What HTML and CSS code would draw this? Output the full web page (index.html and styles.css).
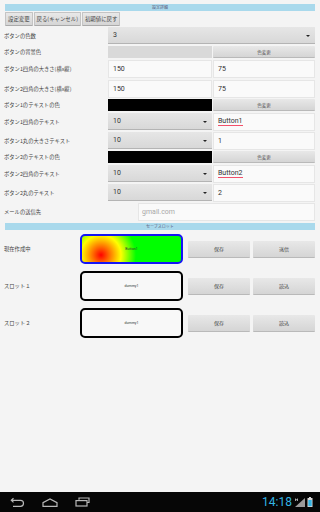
FILE: index.html
```html
<!DOCTYPE html>
<html lang="ja">
<head>
<meta charset="utf-8">
<link rel="stylesheet" href="styles.css">
</head>
<body>
<div class="screen">
  <div class="content">
    <div class="bar">設定詳細</div>
    <div class="toolbar">
      <div class="btn tb">設定変更</div>
      <div class="btn tb">戻る(キャンセル)</div>
      <div class="btn tb">初期値に戻す</div>
    </div>

    <div class="row h19">
      <div class="label">ボタンの色数</div>
      <div class="spinner wide"><span>3</span><i class="tri"></i></div>
    </div>
    <div class="row h14">
      <div class="label">ボタンの背景色</div>
      <div class="cell swatch grey"></div>
      <div class="cell2 btn small">色変更</div>
    </div>
    <div class="row h20">
      <div class="label">ボタン1四角の大きさ(横x縦)</div>
      <div class="cell edit">150</div>
      <div class="cell2 edit">75</div>
    </div>
    <div class="row h19">
      <div class="label">ボタン2四角の大きさ(横x縦)</div>
      <div class="cell edit">150</div>
      <div class="cell2 edit">75</div>
    </div>
    <div class="row h14">
      <div class="label">ボタン1のテキストの色</div>
      <div class="cell swatch black"></div>
      <div class="cell2 btn small">色変更</div>
    </div>
    <div class="row h19">
      <div class="label">ボタン1四角のテキスト</div>
      <div class="cell spinner"><span>10</span><i class="tri"></i></div>
      <div class="cell2 edit"><span class="spell">Button1</span></div>
    </div>
    <div class="row h19">
      <div class="label">ボタン1丸の大きさテキスト</div>
      <div class="cell spinner"><span>10</span><i class="tri"></i></div>
      <div class="cell2 edit">1</div>
    </div>
    <div class="row h14">
      <div class="label">ボタン2のテキストの色</div>
      <div class="cell swatch black"></div>
      <div class="cell2 btn small">色変更</div>
    </div>
    <div class="row h19">
      <div class="label">ボタン2四角のテキスト</div>
      <div class="cell spinner"><span>10</span><i class="tri"></i></div>
      <div class="cell2 edit"><span class="spell">Button2</span></div>
    </div>
    <div class="row h19">
      <div class="label">ボタン2丸のテキスト</div>
      <div class="cell spinner"><span>10</span><i class="tri"></i></div>
      <div class="cell2 edit">2</div>
    </div>
    <div class="row h20">
      <div class="label mail">メールの送信先</div>
      <div class="cell2 edit hint">gmail.com</div>
    </div>

    <div class="bar bar2">セーブスロット</div>

    <div class="slots">
      <div class="slot">
        <div class="slabel">現在作成中</div>
        <div class="preview current"><span>Button1</span></div>
        <div class="btn sbtn">保存</div>
        <div class="btn sbtn">送信</div>
      </div>
      <div class="slot">
        <div class="slabel">スロット１</div>
        <div class="preview"><span>dummy1</span></div>
        <div class="btn sbtn">保存</div>
        <div class="btn sbtn">読込</div>
      </div>
      <div class="slot">
        <div class="slabel">スロット２</div>
        <div class="preview"><span>dummy1</span></div>
        <div class="btn sbtn">保存</div>
        <div class="btn sbtn">読込</div>
      </div>
    </div>
  </div>

  <div class="navbar">
    <div class="navkeys">
      <svg class="key back" width="15" height="10" viewBox="0 0 15 10"><path d="M3.5 1.2 L1.3 3.3 L3.5 5.4 M1.5 3.3 H10.5 A3 3 0 0 1 10.5 9.3 H3" fill="none" stroke="#b8b8b8" stroke-width="1.2"/></svg>
      <svg class="key home" width="16" height="9" viewBox="0 0 16 9"><path d="M1 8.3 V4.6 L8 0.9 L15 4.6 V8.3 Z" fill="none" stroke="#b8b8b8" stroke-width="1.2"/></svg>
      <svg class="key recent" width="15" height="10" viewBox="0 0 15 10"><path d="M4 2.8 V1 H14 V5.5 H12" fill="none" stroke="#b8b8b8" stroke-width="1.2"/><rect x="1" y="3.6" width="11" height="5.4" fill="none" stroke="#b8b8b8" stroke-width="1.2"/></svg>
    </div>
    <div class="status">
      <span class="clock">14:18</span>
      <svg width="10" height="9" viewBox="0 0 10 9"><path d="M10 0 V9 H0 Z" fill="#9a9a9a"/><path d="M0.5 0.5 V3 M2.5 0.5 V3 M0.5 1.7 H2.5" stroke="#ddd" stroke-width="0.7"/></svg>
      <svg width="6" height="10" viewBox="0 0 6 10"><rect x="2" y="0" width="2" height="1" fill="#d8d8d8"/><rect x="0.5" y="1" width="5" height="9" fill="#d8d8d8"/><rect x="1.3" y="3" width="3.4" height="6.2" fill="#33b5e5"/></svg>
    </div>
  </div>
</div>
</body>
</html>
```

FILE: styles.css
```css
* { box-sizing: border-box; }
html, body { margin: 0; padding: 0; }
body {
  width: 320px;
  height: 512px;
  overflow: hidden;
  background: #f4f4f4;
  font-family: "Noto Sans CJK JP", "Noto Sans", sans-serif;
  color: #444;
}
.screen {
  display: flex;
  flex-direction: column;
  height: 512px;
}
.content {
  flex: 1;
  padding: 4px 5px 0 4px;
}
.bar {
  margin-left: 1px;
  height: 7px;
  background: #a9d9ec;
  font-size: 4px;
  line-height: 7px;
  text-align: center;
  color: #557;
}
.toolbar {
  display: flex;
  gap: 1px;
  margin: 1px 0 0 1px;
  height: 14px;
}
.btn {
  background: linear-gradient(#e8e8e8, #d5d5d5);
  border-bottom: 1px solid #b9b9b9;
  border-radius: 1px;
  display: flex;
  align-items: center;
  justify-content: center;
  color: #444;
}
.tb {
  padding: 0 2px;
  font-size: 5.4px;
  border: 1px solid #c4c4c4;
  border-bottom-color: #aaa;
}
.row {
  display: flex;
  align-items: center;
}
.h14 { height: 14px; }
.h19 { height: 19px; }
.h20 { height: 20px; }
.label {
  width: 104px;
  flex: none;
  font-size: 5.3px;
  color: #444;
  white-space: nowrap;
}
.label.mail { width: 134px; }
.cell {
  width: 104px;
  flex: none;
  margin-right: 1px;
}
.cell2 { flex: 1; }
.spinner {
  height: 17px;
  background: linear-gradient(#e6e6e6, #d8d8d8);
  border-bottom: 1px solid #b4b4b4;
  display: flex;
  align-items: center;
  justify-content: space-between;
  padding: 0 5px;
  font-family: Roboto, "Noto Sans", sans-serif;
  font-size: 7px;
  color: #333;
}
.spinner.wide { flex: 1; }
.tri {
  width: 0;
  height: 0;
  border-left: 2px solid transparent;
  border-right: 2px solid transparent;
  border-top: 2.5px solid #222;
  margin-top: 1px;
}
.swatch { height: 12px; }
.swatch.grey { background: #d9d9d9; }
.swatch.black { background: #000; }
.small {
  height: 12px;
  font-size: 4.5px;
  color: #555;
}
.edit {
  height: 18px;
  background: #fafafa;
  border: 1px solid #e6e6e6;
  display: flex;
  align-items: center;
  padding-left: 4px;
  font-family: Roboto, "Noto Sans", sans-serif;
  font-size: 7px;
  color: #333;
}
.edit.hint { color: #a8a8a8; padding-left: 3px; }
.spell {
  border-bottom: 1px solid #f2506a;
  line-height: 8px;
}
.bar2 { margin-top: 1px; }
.slots {
  display: flex;
  flex-direction: column;
  gap: 7px;
  margin-top: 4px;
}
.slot {
  display: flex;
  align-items: center;
  height: 30px;
}
.slabel {
  width: 76px;
  flex: none;
  font-size: 5.3px;
  color: #444;
}
.preview {
  width: 103px;
  height: 30px;
  flex: none;
  border: 2px solid #000;
  border-radius: 5px;
  background: #f8f8f8;
  display: flex;
  align-items: center;
  justify-content: center;
  font-family: Roboto, "Noto Sans", sans-serif;
  font-size: 3.6px;
  color: #333;
  margin-right: 5px;
}
.preview.current {
  border-color: #1515f5;
  background: radial-gradient(circle at 19px 19px, #ff0000 0, #ff6a00 8px, #ffff00 20px, #00ff00 35px);
}
.sbtn {
  width: 62px;
  height: 17px;
  font-size: 5px;
  margin-right: 3px;
}
.sbtn:last-child { margin-right: 0; flex: 1; }
.navbar {
  height: 20px;
  background: #060606;
  display: flex;
  align-items: center;
  justify-content: space-between;
  padding: 0 7px 0 10px;
}
.navkeys {
  display: flex;
  align-items: center;
  gap: 17px;
}
.status {
  display: flex;
  align-items: center;
  gap: 2px;
}
.clock {
  font-family: Roboto, "Noto Sans", sans-serif;
  font-size: 12px;
  color: #33b5e5;
  margin-right: 1px;
}
```
